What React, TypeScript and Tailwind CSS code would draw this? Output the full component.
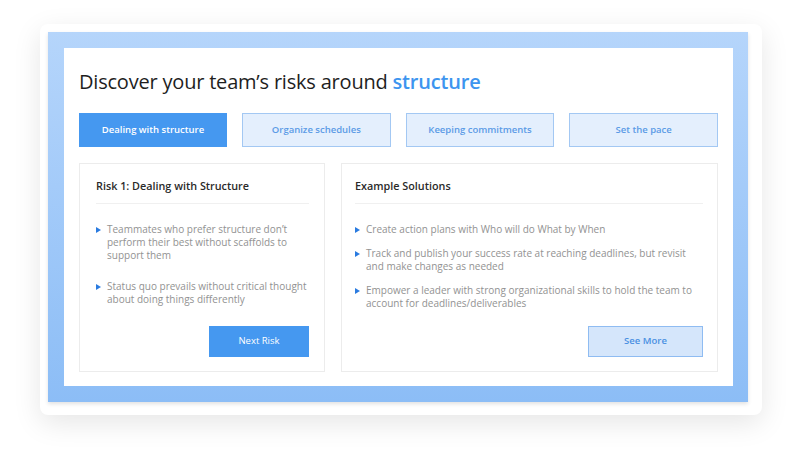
import React from "react";

const Tri = () => (
  <svg width="5" height="6" viewBox="0 0 5 6" className="shrink-0 mt-[4px]">
    <path d="M0 0 L5 3 L0 6 Z" fill="#2a7be0" />
  </svg>
);

const Item = ({ children }: { children: React.ReactNode }) => (
  <li className="flex gap-[6px] items-start">
    <Tri />
    <span>{children}</span>
  </li>
);

export default function App() {
  const font = { fontFamily: '"Open Sans", "Noto Sans", sans-serif' };
  return (
    <div className="w-[800px] h-[468px] bg-white overflow-hidden pt-[24px] pl-[40px]" style={font}>
      <div className="w-[722px] h-[391px] bg-white rounded-[8px] shadow-[0_8px_28px_rgba(0,0,0,0.10)] pl-[8px] pt-[8px]">
        <div className="w-[700px] h-[370px] bg-gradient-to-b from-[#b5d5fb] to-[#8cbdf6] pt-[16px] pl-[16px] shadow-[0_2px_4px_rgba(0,0,0,0.12)]">
          <div className="w-[669px] h-[338px] bg-white pl-[15px] pt-[20px]">
            <h1 className="text-[20px] leading-[28px] text-[#1e1e1e] tracking-[-0.2px]">
              Discover your team’s risks around{" "}
              <span className="text-[#3d95ef] font-semibold">structure</span>
            </h1>
            <div className="flex gap-[15px] mt-[17px] w-[639px]">
              <div className="w-[148px] h-[34px] flex items-center justify-center bg-[#4598f0] text-white text-[9.5px] font-semibold">
                Dealing with structure
              </div>
              {["Organize schedules", "Keeping commitments", "Set the pace"].map((t) => (
                <div
                  key={t}
                  className="flex-1 h-[34px] flex items-center justify-center bg-[#e4effd] border border-[#a3c8f3] text-[#5b9be6] text-[9.5px] font-semibold"
                >
                  {t}
                </div>
              ))}
            </div>
            <div className="flex gap-[16px] mt-[16px] w-[639px]">
              <div className="w-[246px] h-[209px] border border-[#ececec] pt-[14px] pl-[16px] pr-[15px] flex flex-col">
                <div className="text-[10.8px] leading-[16px] font-semibold text-[#2a2a2a]">Risk 1: Dealing with Structure</div>
                <div className="h-px bg-[#f0f0f0] mt-[9px]" />
                <ul className="mt-[19px] flex flex-col gap-[18px] text-[10px] leading-[13px] text-[#929292]">
                  <Item>Teammates who prefer structure don’t perform their best without scaffolds to support them</Item>
                  <Item>Status quo prevails without critical thought about doing things differently</Item>
                </ul>
                <div className="mt-auto mb-[14px] flex justify-end">
                  <div className="w-[100px] h-[31px] bg-[#4598f0] text-white text-[9.5px] flex items-center justify-center">
                    Next Risk
                  </div>
                </div>
              </div>
              <div className="flex-1 h-[209px] border border-[#ececec] pt-[14px] pl-[13px] pr-[14px] flex flex-col">
                <div className="text-[10.8px] leading-[16px] font-semibold text-[#2a2a2a]">Example Solutions</div>
                <div className="h-px bg-[#f0f0f0] mt-[9px]" />
                <ul className="mt-[19px] flex flex-col gap-[11px] text-[10px] leading-[13px] text-[#929292]">
                  <Item>Create action plans with Who will do What by When</Item>
                  <Item>Track and publish your success rate at reaching deadlines, but revisit and make changes as needed</Item>
                  <Item>Empower a leader with strong organizational skills to hold the team to account for deadlines/deliverables</Item>
                </ul>
                <div className="mt-auto mb-[14px] flex justify-end">
                  <div className="w-[115px] h-[31px] bg-[#d5e6fb] border border-[#8fbcf2] text-[#4a90e2] font-semibold text-[9.5px] flex items-center justify-center">
                    See More
                  </div>
                </div>
              </div>
            </div>
          </div>
        </div>
      </div>
    </div>
  );
}
